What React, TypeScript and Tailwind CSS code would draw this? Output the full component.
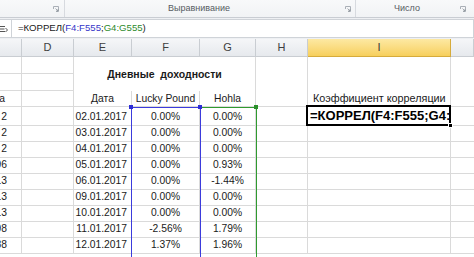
import React from "react";

// sheet rows: C fragment, date, F value, G value
const rows = [
  { c: "2", d: "02.01.2017", f: "0.00%", g: "0.00%" },
  { c: "2", d: "03.01.2017", f: "0.00%", g: "0.00%" },
  { c: "2", d: "04.01.2017", f: "0.00%", g: "0.00%" },
  { c: "96", d: "05.01.2017", f: "0.00%", g: "0.93%" },
  { c: "13", d: "06.01.2017", f: "0.00%", g: "-1.44%" },
  { c: "13", d: "09.01.2017", f: "0.00%", g: "0.00%" },
  { c: "13", d: "10.01.2017", f: "0.00%", g: "0.00%" },
  { c: "98", d: "11.01.2017", f: "-2.56%", g: "1.79%" },
  { c: "88", d: "12.01.2017", f: "1.37%", g: "1.96%" },
];

const cols = "grid grid-cols-[22px_52px_58px_68px_56px_52px_143px_23px]";
const line = "border-[#dadada]";

function Launcher() {
  return (
    <svg width="6" height="6" viewBox="0 0 6 6" className="shrink-0">
      <path d="M0.5 3V0.5H5.5V5.5H3" fill="none" stroke="#a9afb6" strokeWidth="1" />
      <path d="M2.5 2.5L5 5M5 3.2V5H3.2" fill="none" stroke="#8d949c" strokeWidth="0.8" />
    </svg>
  );
}

function ColHeader({ label, active }: { label: string; active?: boolean }) {
  return (
    <div
      className={
        active
          ? "flex items-center justify-center border-r border-b border-[#d6ab3b] bg-gradient-to-b from-[#fde9a2] to-[#f7cf5b] text-[#3a3a3a]"
          : "flex items-center justify-center border-r border-b border-[#c9cdd2] bg-gradient-to-b from-[#f5f6f8] to-[#e6e9ed] text-[#3e3e3e]"
      }
    >
      {label}
    </div>
  );
}

export default function App() {
  return (
    <div className="w-[474px] h-[257px] overflow-hidden bg-white text-[10.3px] text-[#1a1a1a] font-['Liberation_Sans',Arial,sans-serif]">
      {/* ribbon bottom */}
      <div className="h-[18px] flex bg-gradient-to-b from-[#f8f9fa] to-[#f1f3f5] border-b border-[#c9cdd3] text-[9px] text-[#555b62]">
        <div className="w-[65px] flex items-center justify-end pr-[5px] border-r border-[#d7dadf]">
          <Launcher />
        </div>
        <div className="w-[291px] flex items-center justify-between pl-[103px] pr-[4px] border-r border-[#d7dadf]">
          <span>Выравнивание</span>
          <Launcher />
        </div>
        <div className="flex-1 flex items-center justify-between pl-[38px] pr-[8px]">
          <span>Число</span>
          <Launcher />
        </div>
      </div>

      {/* formula bar */}
      <div className="h-[21px] flex bg-[#eef0f3] pt-[1px] pb-[1px]">
        <div className="w-[11px] flex items-center bg-white border-y border-[#cfd3d8]">
          <svg width="8" height="8" viewBox="0 0 8 8">
            <path d="M0 1.5H5M0 4H4.5M0 6.5H5" stroke="#555" strokeWidth="1" />
            <path d="M5.5 3L7.5 5L5.5 7" fill="none" stroke="#555" strokeWidth="1" />
          </svg>
        </div>
        <div className="flex-1 flex items-center pl-[6px] bg-white border border-[#cfd3d8] text-[9.6px] whitespace-nowrap">
          <span>=КОРРЕЛ(</span>
          <span className="text-[#3535c8]">F4:F555</span>
          <span>;</span>
          <span className="text-[#2c8a2c]">G4:G555</span>
          <span>)</span>
        </div>
      </div>

      {/* column headers */}
      <div className={`${cols} h-[18px] text-[11px]`}>
        <ColHeader label="" />
        <ColHeader label="D" />
        <ColHeader label="E" />
        <ColHeader label="F" />
        <ColHeader label="G" />
        <ColHeader label="H" />
        <ColHeader label="I" active />
        <ColHeader label="" />
      </div>

      {/* sheet */}
      <div className="relative">
        <div className={`${cols} grid-rows-[17px_17px_16px_19px_repeat(9,16px)]`}>
          {/* rows 1-2 */}
          <div className={`border-r border-b ${line}`} />
          <div className={`border-r border-b ${line}`} />
          <div className={`col-span-3 row-span-2 flex items-center justify-center pt-[1px] font-bold text-[10.5px] whitespace-pre border-r ${line}`}>
            Дневные  доходности
          </div>
          <div className={`row-span-2 border-r ${line}`} />
          <div className={`row-span-2 border-r ${line}`} />
          <div className="row-span-2" />
          <div className={`border-r border-b ${line}`} />
          <div className={`border-r border-b ${line}`} />

          {/* row 3: headers */}
          <div className={`flex items-center justify-end pr-[16px] border-r border-b ${line}`}>а</div>
          <div className={`border-r border-b ${line}`} />
          <div className={`flex items-center justify-center border-r border-b ${line}`}>Дата</div>
          <div className={`flex items-center justify-center border-r border-b ${line}`}>Lucky Pound</div>
          <div className={`flex items-center justify-center border-r border-b ${line}`}>Hohla</div>
          <div className={`border-r border-b ${line}`} />
          <div className={`flex items-center pl-[5px] whitespace-nowrap text-[10.8px] border-r border-b ${line}`}>
            Коэффициент корреляции
          </div>
          <div className={`border-b ${line}`} />

          {rows.map((r, i) => (
            <React.Fragment key={r.d}>
              <div className={`flex items-end justify-end pr-[14px] pb-[1px] border-r border-b ${line}`}>{r.c}</div>
              <div className={`border-r border-b ${line}`} />
              <div className={`flex items-end justify-end pr-[4px] pb-[1px] border-r border-b ${line}`}>{r.d}</div>
              <div className={`flex items-end justify-center pb-[1px] border-r border-b ${line}`}>{r.f}</div>
              <div className={`flex items-end justify-center pb-[1px] border-r border-b ${line}`}>{r.g}</div>
              <div className={`border-r border-b ${line}`} />
              {i === 0 ? (
                <div className={`relative flex items-center pl-[2px] border-r border-b ${line}`}>
                  <span className="overflow-hidden whitespace-nowrap font-bold text-[13px] text-black">
                    =КОРРЕЛ(F4:F555;G4:G555)
                  </span>
                  <div className="absolute -left-[2px] -top-[2px] -right-[1px] -bottom-[1px] border-2 border-black" />
                  <div className="absolute -right-[3px] -bottom-[3px] w-[5px] h-[5px] bg-black border border-white" />
                </div>
              ) : (
                <div className={`border-r border-b ${line}`} />
              )}
              <div className={`border-b ${line}`} />
            </React.Fragment>
          ))}
        </div>

        {/* range highlights */}
        <div className="absolute left-[200px] top-[50px] w-[57px] h-[220px] border-t border-r border-[#2f9a2f]" />
        <div className="absolute left-[131px] top-[50px] w-[70px] h-[220px] border-t border-x border-[#3b3bdc]" />
        <div className="absolute left-[129px] top-[48px] w-[4px] h-[4px] bg-[#2d2dd6]" />
        <div className="absolute left-[198px] top-[48px] w-[4px] h-[4px] bg-[#2d2dd6]" />
        <div className="absolute left-[254px] top-[48px] w-[4px] h-[4px] bg-[#2a8f2a]" />
      </div>
    </div>
  );
}
